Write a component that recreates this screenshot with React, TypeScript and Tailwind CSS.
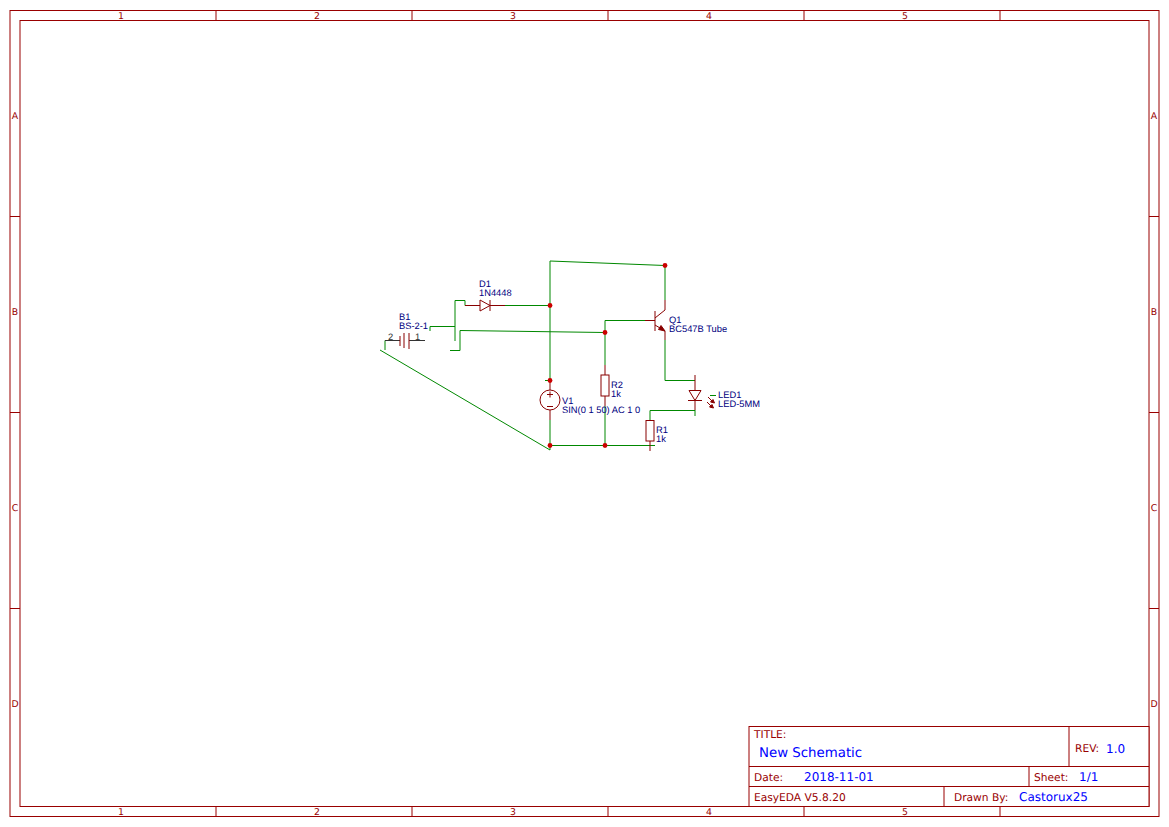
const columnTicks = [216, 412, 608, 804, 1000];
const rowTicks = [216.5, 412.5, 608.5];
const columnLabels = [
  { x: 121, label: '1' },
  { x: 317, label: '2' },
  { x: 513, label: '3' },
  { x: 709, label: '4' },
  { x: 905, label: '5' },
];
const rowLabels = [
  { y: 119, label: 'A' },
  { y: 315, label: 'B' },
  { y: 511, label: 'C' },
  { y: 707, label: 'D' },
];

const wires = [
  '385,350 385,340.5',
  '380,350 550,450',
  '430,331 430,326.5 455,326.5',
  '455,341 455,300.5 465,300.5 465,305.5',
  '505,305.5 550,305.5',
  '450,350.5 460,350.5 460,330.5 605,332.5',
  '550,380 550,261 665,265.5 665,300',
  '550,420 550,450',
  '605,365 605,320.5 645,320.5',
  '605,406 605,445.5',
  '665,340 665,380.5 695,380.5',
  '695,410 695,416',
  '650,420 650,410.5 695,410.5',
  '550,445.5 655,445.5',
  '545,380.5 550,380.5',
  '710,395.5 716,395.5',
];

const pins = [
  '465,305.5 480,305.5',
  '490,305.5 505,305.5',
  '645,320.5 655,320.5',
  '665,300 665,310 655,318',
  '655,325 665,331 665,340',
  '550,380 550,390',
  '550,410 550,420',
  '605,365 605,375',
  '605,396 605,406',
  '650,441 650,451',
  '695,375 695,390',
  '695,400 695,410',
];

const dots = [
  [550, 305.5],
  [665, 265.5],
  [605, 332.5],
  [550, 380.5],
  [550, 445.5],
  [605, 445.5],
];

export default function App() {
  return (
    <div className="h-[827px] w-[1169px] overflow-hidden bg-white">
      <svg
        width="1169"
        height="827"
        viewBox="0 0 1169 827"
        className="block font-['DejaVu_Sans',sans-serif] [text-rendering:geometricPrecision]"
      >
        {/* sheet frame */}
        <g className="fill-none stroke-[#990000]">
          <rect x="10" y="10.5" width="1149" height="806" />
          <rect x="20" y="20.5" width="1129" height="786" />
          {columnTicks.map((x) => (
            <g key={x}>
              <line x1={x} y1="10.5" x2={x} y2="20.5" />
              <line x1={x} y1="806.5" x2={x} y2="816.5" />
            </g>
          ))}
          {rowTicks.map((y) => (
            <g key={y}>
              <line x1="10" y1={y} x2="20" y2={y} />
              <line x1="1149" y1={y} x2="1159" y2={y} />
            </g>
          ))}
        </g>
        <g className="fill-[#990000] text-[9.33px]" textAnchor="middle">
          {columnLabels.map((c) => (
            <g key={c.label}>
              <text x={c.x} y="19">{c.label}</text>
              <text x={c.x} y="815">{c.label}</text>
            </g>
          ))}
          {rowLabels.map((r) => (
            <g key={r.label}>
              <text x="15" y={r.y}>{r.label}</text>
              <text x="1154" y={r.y}>{r.label}</text>
            </g>
          ))}
        </g>

        {/* title block */}
        <g className="fill-none stroke-[#990000]">
          <rect x="749" y="726.5" width="400" height="80" fill="#fff" />
          <line x1="749" y1="766.5" x2="1149" y2="766.5" />
          <line x1="749" y1="786.5" x2="1149" y2="786.5" />
          <line x1="1069" y1="726.5" x2="1069" y2="766.5" />
          <line x1="1029" y1="766.5" x2="1029" y2="786.5" />
          <line x1="944" y1="786.5" x2="944" y2="806.5" />
        </g>
        <g className="fill-[#990000] text-[10.67px]">
          <text x="754" y="738">TITLE:</text>
          <text x="1075" y="752">REV:</text>
          <text x="754" y="781">Date:</text>
          <text x="1034" y="781">Sheet:</text>
          <text x="754" y="801">EasyEDA V5.8.20</text>
          <text x="954" y="801">Drawn By:</text>
        </g>
        <g className="fill-[#0000ff] text-[12px]">
          <text x="759" y="757" className="text-[13.33px]">New Schematic</text>
          <text x="1106" y="753">1.0</text>
          <text x="804" y="781">2018-11-01</text>
          <text x="1079" y="781">1/1</text>
          <text x="1019" y="801">Castorux25</text>
        </g>

        {/* wires */}
        <g className="fill-none stroke-[#008800]">
          {wires.map((points) => (
            <polyline key={points} points={points} />
          ))}
        </g>

        {/* symbols */}
        <g className="fill-none stroke-[#880000]">
          {pins.map((points) => (
            <polyline key={points} points={points} />
          ))}
          {/* D1 */}
          <polygon points="480,300 480,311 490,305.5" />
          <line x1="490" y1="300" x2="490" y2="311" />
          {/* Q1 */}
          <line x1="655" y1="311" x2="655" y2="331" />
          <polygon points="665,331 658.5,329.5 661,325.5" className="fill-[#880000]" />
          {/* R2, R1 */}
          <rect x="601" y="375" width="8" height="21" />
          <rect x="646" y="420.5" width="8" height="20.5" />
          {/* V1 */}
          <circle cx="550" cy="400" r="10" />
          <line x1="547" y1="394.5" x2="553" y2="394.5" />
          <line x1="550" y1="391.5" x2="550" y2="397.5" />
          <line x1="547" y1="406.5" x2="553" y2="406.5" />
          {/* LED1 */}
          <polygon points="689,390.5 701,390.5 695,400.5" />
          <line x1="688" y1="400.5" x2="702" y2="400.5" />
          <line x1="708" y1="397" x2="713" y2="402" />
          <line x1="707" y1="402" x2="712" y2="407" />
          <polygon points="714.5,403 710.5,402 713,399.5" className="fill-[#880000]" />
          <polygon points="713.5,408 709.5,407 712,404.5" className="fill-[#880000]" />
        </g>

        {/* B1 */}
        <g className="fill-none">
          <line x1="385" y1="340.5" x2="400" y2="340.5" className="stroke-[#333333]" />
          <line x1="409" y1="340.5" x2="425" y2="340.5" className="stroke-[#333333]" />
          <g className="stroke-[#880000]">
            <line x1="400" y1="336" x2="400" y2="346" />
            <line x1="404" y1="333" x2="404" y2="348" />
            <line x1="409" y1="333" x2="409" y2="349" />
          </g>
        </g>
        <g className="fill-[#333333] text-[9.33px] font-['Liberation_Sans',sans-serif]">
          <text x="388" y="339.5">2</text>
          <text x="415" y="339.5">1</text>
        </g>

        {dots.map(([cx, cy]) => (
          <circle key={`${cx}-${cy}`} cx={cx} cy={cy} r="2.4" className="fill-[#cc0000]" />
        ))}

        {/* part labels */}
        <g className="fill-[#000080] text-[9.33px] font-['Liberation_Sans',sans-serif]">
          <text x="479" y="287">D1</text>
          <text x="479" y="296">1N4448</text>
          <text x="399" y="320">B1</text>
          <text x="399" y="329">BS-2-1</text>
          <text x="669" y="323">Q1</text>
          <text x="669" y="332">BC547B Tube</text>
          <text x="611" y="388">R2</text>
          <text x="611" y="397">1k</text>
          <text x="562" y="403.5">V1</text>
          <text x="562" y="412.5">SIN(0 1 50) AC 1 0</text>
          <text x="718" y="398">LED1</text>
          <text x="718" y="407">LED-5MM</text>
          <text x="656" y="433">R1</text>
          <text x="656" y="442">1k</text>
        </g>
      </svg>
    </div>
  );
}
